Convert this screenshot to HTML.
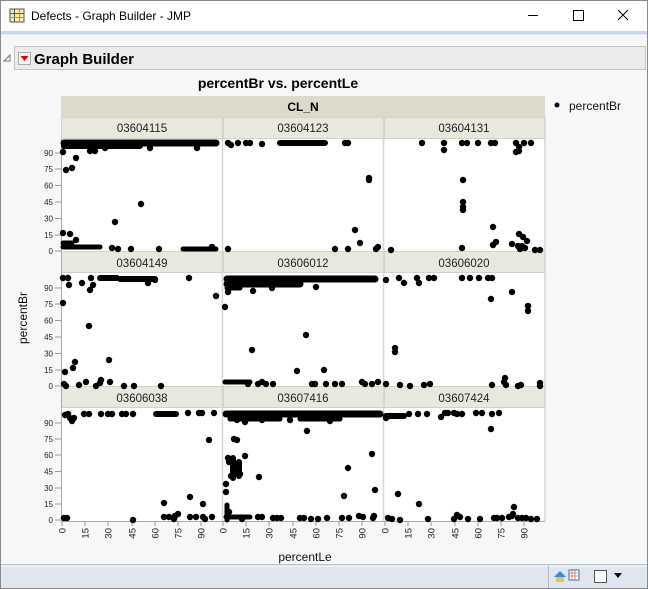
<!DOCTYPE html>
<html><head><meta charset="utf-8"><style>
html,body{margin:0;padding:0;width:648px;height:589px;overflow:hidden;background:#f7f7f7;font-family:"Liberation Sans",sans-serif}
svg{position:absolute;left:0;top:0}
</style></head><body>
<svg width="648" height="589" viewBox="0 0 648 589" xmlns="http://www.w3.org/2000/svg" font-family="Liberation Sans, sans-serif">
<!-- title bar -->
<rect x="0" y="0" width="648" height="31" fill="#fff"/>
<rect x="0" y="31" width="648" height="3" fill="#c9d7ea"/>
<rect x="0" y="34" width="648" height="1" fill="#e4ebf4"/>
<rect x="0.5" y="0.5" width="647" height="588" fill="none" stroke="#8a8a8a"/>
<g>
<rect x="10" y="9" width="14" height="13" fill="#f3f1a8" stroke="#555" stroke-width="1"/>
<line x1="10" y1="13.5" x2="24" y2="13.5" stroke="#555"/>
<line x1="14.5" y1="9" x2="14.5" y2="22" stroke="#555"/>
<line x1="19.5" y1="9" x2="19.5" y2="22" stroke="#6a8"/>
<line x1="10" y1="17.5" x2="24" y2="17.5" stroke="#6a8"/>
</g>
<text x="31" y="20" font-size="12" fill="#000">Defects - Graph Builder - JMP</text>
<line x1="528" y1="15.5" x2="538" y2="15.5" stroke="#000"/>
<rect x="573.5" y="10.5" width="10" height="10" fill="none" stroke="#000"/>
<path d="M618 10 L628 20 M628 10 L618 20" stroke="#000" stroke-width="1"/>

<!-- outline header -->
<path d="M4 61 L10 55 L10 61 Z" fill="none" stroke="#777"/>
<rect x="14.5" y="46.5" width="631" height="23" fill="#ebebeb" stroke="#c4c4c4"/>
<rect x="18.5" y="52.5" width="12" height="12" fill="#f4f4f4" stroke="#aaa"/>
<path d="M20.5 56 L28.5 56 L24.5 61 Z" fill="#d00"/>
<text x="34" y="64" font-size="15" font-weight="bold" fill="#000">Graph Builder</text>

<!-- chart title -->
<text x="278" y="88" font-size="14" font-weight="bold" text-anchor="middle" fill="#000">percentBr vs. percentLe</text>
<rect x="61" y="96" width="484" height="21" fill="#dcdacb"/>
<text x="303" y="111" font-size="12" font-weight="bold" text-anchor="middle">CL_N</text>

<!-- legend -->
<circle cx="557" cy="105" r="2.5" fill="#000"/>
<text x="569" y="110" font-size="12" fill="#111">percentBr</text>

<!-- strips -->
<g fill="#e8e8df" stroke="#d2d2c8">
<rect x="61.5" y="117.5" width="161" height="21"/><rect x="223.5" y="117.5" width="160" height="21"/><rect x="384.5" y="117.5" width="160" height="21"/>
<rect x="61.5" y="251.5" width="161" height="21"/><rect x="223.5" y="251.5" width="160" height="21"/><rect x="384.5" y="251.5" width="160" height="21"/>
<rect x="61.5" y="386.5" width="161" height="21"/><rect x="223.5" y="386.5" width="160" height="21"/><rect x="384.5" y="386.5" width="160" height="21"/>
</g>
<g font-size="11.5" text-anchor="middle" fill="#222">
<text x="142" y="132">03604115</text><text x="303" y="132">03604123</text><text x="464" y="132">03604131</text>
<text x="142" y="267">03604149</text><text x="303" y="267">03606012</text><text x="464" y="267">03606020</text>
<text x="142" y="402">03606038</text><text x="303" y="402">03607416</text><text x="464" y="402">03607424</text>
</g>
<!-- plot backgrounds -->
<g fill="#fff">
<rect x="61" y="139" width="484" height="112"/>
<rect x="61" y="273" width="484" height="113"/>
<rect x="61" y="408" width="484" height="113"/>
</g>
<g stroke="#d6d6d6" stroke-width="1.5">
<line x1="222.5" y1="117" x2="222.5" y2="521"/>
<line x1="383.5" y1="117" x2="383.5" y2="521"/>
<line x1="545" y1="117" x2="545" y2="521"/>
</g>
<line x1="61" y1="521.5" x2="545" y2="521.5" stroke="#aaa"/>
<line x1="61.5" y1="139" x2="61.5" y2="522" stroke="#aaa"/>

<!-- y axes -->
<g stroke="#999">
<path d="M55 251h6M55 235h6M55 218.5h6M55 202h6M55 185.5h6M55 169h6M55 153h6"/>
<path d="M55 386h6M55 370h6M55 353.5h6M55 337h6M55 320.5h6M55 304h6M55 288h6"/>
<path d="M55 520h6M55 504h6M55 488h6M55 471.5h6M55 455h6M55 439h6M55 423h6"/>
</g>
<g font-size="8" text-anchor="end" fill="#223">
<text x="53" y="254">0</text><text x="53" y="238">15</text><text x="53" y="221.5">30</text><text x="53" y="205">45</text><text x="53" y="188.5">60</text><text x="53" y="172">75</text><text x="53" y="156">90</text>
<text x="53" y="389">0</text><text x="53" y="373">15</text><text x="53" y="356.5">30</text><text x="53" y="340">45</text><text x="53" y="323.5">60</text><text x="53" y="307">75</text><text x="53" y="291">90</text>
<text x="53" y="523">0</text><text x="53" y="507">15</text><text x="53" y="491">30</text><text x="53" y="474.5">45</text><text x="53" y="458">60</text><text x="53" y="442">75</text><text x="53" y="426">90</text>
</g>
<!-- x axes -->
<g stroke="#999">
<path d="M62 521v5M85 521v5M108 521v5M132 521v5M155 521v5M178 521v5M201 521v5"/>
<path d="M223 521v5M246 521v5M269 521v5M293 521v5M316 521v5M339 521v5M362 521v5"/>
<path d="M385 521v5M408 521v5M431 521v5M455 521v5M478 521v5M501 521v5M524 521v5"/>
</g>
<g font-size="9.5" fill="#222" text-anchor="end">
<text transform="translate(65.5,528) rotate(-90)">0</text><text transform="translate(88.5,528) rotate(-90)">15</text><text transform="translate(111.5,528) rotate(-90)">30</text><text transform="translate(135.5,528) rotate(-90)">45</text><text transform="translate(158.5,528) rotate(-90)">60</text><text transform="translate(181.5,528) rotate(-90)">75</text><text transform="translate(204.5,528) rotate(-90)">90</text>
<text transform="translate(226.5,528) rotate(-90)">0</text><text transform="translate(249.5,528) rotate(-90)">15</text><text transform="translate(272.5,528) rotate(-90)">30</text><text transform="translate(296.5,528) rotate(-90)">45</text><text transform="translate(319.5,528) rotate(-90)">60</text><text transform="translate(342.5,528) rotate(-90)">75</text><text transform="translate(365.5,528) rotate(-90)">90</text>
<text transform="translate(388.5,528) rotate(-90)">0</text><text transform="translate(411.5,528) rotate(-90)">15</text><text transform="translate(434.5,528) rotate(-90)">30</text><text transform="translate(458.5,528) rotate(-90)">45</text><text transform="translate(481.5,528) rotate(-90)">60</text><text transform="translate(504.5,528) rotate(-90)">75</text><text transform="translate(527.5,528) rotate(-90)">90</text>
</g>
<text x="305" y="561" font-size="12" text-anchor="middle" fill="#111">percentLe</text>
<text transform="translate(27,318) rotate(-90)" font-size="12" text-anchor="middle" fill="#111">percentBr</text>

<!-- data bands -->
<g stroke="#000" stroke-linecap="round" fill="none">
<path d="M64 143H216" stroke-width="7"/>
<path d="M64 146H140" stroke-width="6"/>
<path d="M63 247H100" stroke-width="5"/><path d="M63 243H72" stroke-width="5"/><path d="M183 249H216" stroke-width="5"/>
<path d="M280 143H325" stroke-width="6"/>
<path d="M100 278H117M120 279H155" stroke-width="6"/>
<path d="M227 279H375" stroke-width="7"/><path d="M227 284H300" stroke-width="7"/><path d="M227 288H240" stroke-width="5"/>
<path d="M225 382H250" stroke-width="5"/>
<path d="M156 414H176" stroke-width="6"/>
<path d="M226 414H380" stroke-width="7"/><path d="M230 419H280M300 419H340" stroke-width="5"/>
<path d="M226 517H250" stroke-width="5"/><path d="M227 505V520" stroke-width="5"/>
<path d="M233 458V478" stroke-width="6"/><path d="M239 462V476" stroke-width="6"/>
<path d="M386 416H404" stroke-width="6"/>
</g>
<!-- dots -->
<g fill="#000">
<circle cx="63" cy="152" r="3.2"/><circle cx="66" cy="170" r="3.2"/><circle cx="72" cy="168" r="3.2"/><circle cx="76" cy="158" r="3.2"/><circle cx="90" cy="151" r="3.2"/><circle cx="95" cy="151" r="3.2"/><circle cx="105" cy="148" r="3.2"/><circle cx="150" cy="148" r="3.2"/><circle cx="197" cy="148" r="3.2"/>
<circle cx="63" cy="233" r="3.2"/><circle cx="70" cy="234" r="3.2"/><circle cx="76" cy="240" r="3.2"/><circle cx="115" cy="222" r="3.2"/><circle cx="141" cy="204" r="3.2"/><circle cx="112" cy="248" r="3.2"/><circle cx="118" cy="249" r="3.2"/><circle cx="131" cy="249" r="3.2"/><circle cx="159" cy="249" r="3.2"/><circle cx="212" cy="247" r="3.2"/>
<circle cx="228" cy="143" r="3.2"/><circle cx="231" cy="145" r="3.2"/><circle cx="238" cy="143" r="3.2"/><circle cx="246" cy="143" r="3.2"/><circle cx="250" cy="143" r="3.2"/><circle cx="262" cy="144" r="3.2"/><circle cx="345" cy="143" r="3.2"/><circle cx="348" cy="143" r="3.2"/>
<circle cx="369" cy="178" r="3.2"/><circle cx="369" cy="180" r="3.2"/><circle cx="355" cy="230" r="3.2"/><circle cx="360" cy="243" r="3.2"/><circle cx="335" cy="249" r="3.2"/><circle cx="348" cy="249" r="3.2"/><circle cx="376" cy="249" r="3.2"/><circle cx="378" cy="247" r="3.2"/><circle cx="228" cy="249" r="3.2"/>
<circle cx="422" cy="143" r="3.2"/><circle cx="444" cy="143" r="3.2"/><circle cx="444" cy="150" r="3.2"/><circle cx="462" cy="143" r="3.2"/><circle cx="467" cy="143" r="3.2"/><circle cx="478" cy="143" r="3.2"/><circle cx="491" cy="143" r="3.2"/><circle cx="495" cy="143" r="3.2"/><circle cx="516" cy="143" r="3.2"/><circle cx="519" cy="147" r="3.2"/><circle cx="519" cy="151" r="3.2"/><circle cx="524" cy="143" r="3.2"/><circle cx="531" cy="143" r="3.2"/><circle cx="516" cy="152" r="3.2"/>
<circle cx="463" cy="180" r="3.2"/><circle cx="463" cy="202" r="3.2"/><circle cx="463" cy="207" r="3.2"/><circle cx="463" cy="210" r="3.2"/><circle cx="462" cy="248" r="3.2"/><circle cx="493" cy="227" r="3.2"/><circle cx="493" cy="245" r="3.2"/><circle cx="496" cy="242" r="3.2"/><circle cx="512" cy="244" r="3.2"/><circle cx="519" cy="234" r="3.2"/><circle cx="520" cy="249" r="3.2"/><circle cx="523" cy="237" r="3.2"/><circle cx="525" cy="248" r="3.2"/><circle cx="535" cy="250" r="3.2"/><circle cx="540" cy="250" r="3.2"/><circle cx="391" cy="250" r="3.2"/><circle cx="518" cy="246" r="3.2"/><circle cx="527" cy="241" r="3.2"/><circle cx="522" cy="246" r="3.2"/>
<circle cx="63" cy="278" r="3.2"/><circle cx="68" cy="278" r="3.2"/><circle cx="82" cy="283" r="3.2"/><circle cx="91" cy="278" r="3.2"/><circle cx="93" cy="285" r="3.2"/><circle cx="69" cy="285" r="3.2"/><circle cx="63" cy="303" r="3.2"/><circle cx="90" cy="290" r="3.2"/><circle cx="89" cy="326" r="3.2"/><circle cx="109" cy="360" r="3.2"/><circle cx="65" cy="372" r="3.2"/><circle cx="73" cy="368" r="3.2"/><circle cx="75" cy="362" r="3.2"/><circle cx="189" cy="278" r="3.2"/><circle cx="216" cy="296" r="3.2"/><circle cx="155" cy="280" r="3.2"/><circle cx="148" cy="283" r="3.2"/>
<circle cx="64" cy="384" r="3.2"/><circle cx="66" cy="386" r="3.2"/><circle cx="79" cy="385" r="3.2"/><circle cx="86" cy="382" r="3.2"/><circle cx="96" cy="386" r="3.2"/><circle cx="100" cy="383" r="3.2"/><circle cx="101" cy="380" r="3.2"/><circle cx="110" cy="382" r="3.2"/><circle cx="124" cy="386" r="3.2"/><circle cx="134" cy="386" r="3.2"/><circle cx="161" cy="386" r="3.2"/>
<circle cx="225" cy="307" r="3.2"/><circle cx="253" cy="291" r="3.2"/><circle cx="272" cy="288" r="3.2"/><circle cx="316" cy="287" r="3.2"/><circle cx="252" cy="350" r="3.2"/><circle cx="306" cy="335" r="3.2"/><circle cx="297" cy="371" r="3.2"/><circle cx="324" cy="370" r="3.2"/><circle cx="228" cy="292" r="3.2"/>
<circle cx="248" cy="384" r="3.2"/><circle cx="258" cy="384" r="3.2"/><circle cx="262" cy="382" r="3.2"/><circle cx="266" cy="384" r="3.2"/><circle cx="273" cy="384" r="3.2"/><circle cx="312" cy="384" r="3.2"/><circle cx="315" cy="384" r="3.2"/><circle cx="326" cy="384" r="3.2"/><circle cx="335" cy="384" r="3.2"/><circle cx="342" cy="384" r="3.2"/><circle cx="362" cy="382" r="3.2"/><circle cx="365" cy="384" r="3.2"/><circle cx="372" cy="384" r="3.2"/><circle cx="378" cy="382" r="3.2"/>
<circle cx="386" cy="280" r="3.2"/><circle cx="399" cy="278" r="3.2"/><circle cx="404" cy="283" r="3.2"/><circle cx="417" cy="278" r="3.2"/><circle cx="419" cy="283" r="3.2"/><circle cx="429" cy="278" r="3.2"/><circle cx="434" cy="278" r="3.2"/><circle cx="462" cy="278" r="3.2"/><circle cx="470" cy="278" r="3.2"/><circle cx="479" cy="278" r="3.2"/><circle cx="488" cy="278" r="3.2"/><circle cx="492" cy="278" r="3.2"/><circle cx="491" cy="299" r="3.2"/><circle cx="512" cy="292" r="3.2"/><circle cx="528" cy="306" r="3.2"/><circle cx="528" cy="311" r="3.2"/><circle cx="395" cy="348" r="3.2"/><circle cx="395" cy="352" r="3.2"/>
<circle cx="386" cy="384" r="3.2"/><circle cx="400" cy="385" r="3.2"/><circle cx="410" cy="386" r="3.2"/><circle cx="424" cy="385" r="3.2"/><circle cx="430" cy="384" r="3.2"/><circle cx="492" cy="385" r="3.2"/><circle cx="504" cy="382" r="3.2"/><circle cx="506" cy="385" r="3.2"/><circle cx="505" cy="378" r="3.2"/><circle cx="518" cy="386" r="3.2"/><circle cx="521" cy="385" r="3.2"/><circle cx="540" cy="383" r="3.2"/><circle cx="540" cy="386" r="3.2"/>
<circle cx="68" cy="414" r="3.2"/><circle cx="70" cy="418" r="3.2"/><circle cx="72" cy="421" r="3.2"/><circle cx="74" cy="418" r="3.2"/><circle cx="65" cy="415" r="3.2"/><circle cx="84" cy="414" r="3.2"/><circle cx="89" cy="414" r="3.2"/><circle cx="101" cy="414" r="3.2"/><circle cx="108" cy="414" r="3.2"/><circle cx="112" cy="414" r="3.2"/><circle cx="122" cy="414" r="3.2"/><circle cx="126" cy="414" r="3.2"/><circle cx="133" cy="414" r="3.2"/><circle cx="188" cy="413" r="3.2"/><circle cx="199" cy="413" r="3.2"/><circle cx="202" cy="413" r="3.2"/><circle cx="214" cy="413" r="3.2"/><circle cx="209" cy="440" r="3.2"/>
<circle cx="164" cy="503" r="3.2"/><circle cx="190" cy="497" r="3.2"/><circle cx="203" cy="504" r="3.2"/><circle cx="64" cy="518" r="3.2"/><circle cx="67" cy="518" r="3.2"/><circle cx="133" cy="520" r="3.2"/><circle cx="164" cy="517" r="3.2"/><circle cx="169" cy="517" r="3.2"/><circle cx="175" cy="516" r="3.2"/><circle cx="178" cy="514" r="3.2"/><circle cx="190" cy="517" r="3.2"/><circle cx="196" cy="517" r="3.2"/><circle cx="203" cy="517" r="3.2"/><circle cx="212" cy="517" r="3.2"/><circle cx="174" cy="519" r="3.2"/><circle cx="205" cy="519" r="3.2"/>
<circle cx="307" cy="431" r="3.2"/><circle cx="234" cy="439" r="3.2"/><circle cx="237" cy="440" r="3.2"/><circle cx="228" cy="458" r="3.2"/><circle cx="229" cy="462" r="3.2"/><circle cx="236" cy="465" r="3.2"/><circle cx="231" cy="476" r="3.2"/><circle cx="240" cy="474" r="3.2"/><circle cx="259" cy="477" r="3.2"/><circle cx="245" cy="456" r="3.2"/><circle cx="226" cy="484" r="3.2"/><circle cx="226" cy="492" r="3.2"/><circle cx="229" cy="512" r="3.2"/><circle cx="237" cy="420" r="3.2"/><circle cx="245" cy="422" r="3.2"/><circle cx="262" cy="420" r="3.2"/><circle cx="290" cy="420" r="3.2"/><circle cx="330" cy="421" r="3.2"/>
<circle cx="242" cy="519" r="3.2"/><circle cx="258" cy="517" r="3.2"/><circle cx="262" cy="517" r="3.2"/><circle cx="273" cy="518" r="3.2"/><circle cx="277" cy="518" r="3.2"/><circle cx="281" cy="518" r="3.2"/><circle cx="300" cy="518" r="3.2"/><circle cx="304" cy="518" r="3.2"/><circle cx="311" cy="519" r="3.2"/><circle cx="318" cy="519" r="3.2"/><circle cx="327" cy="518" r="3.2"/><circle cx="342" cy="518" r="3.2"/><circle cx="349" cy="518" r="3.2"/><circle cx="359" cy="516" r="3.2"/><circle cx="363" cy="517" r="3.2"/><circle cx="373" cy="518" r="3.2"/><circle cx="374" cy="516" r="3.2"/>
<circle cx="344" cy="496" r="3.2"/><circle cx="348" cy="468" r="3.2"/><circle cx="372" cy="454" r="3.2"/><circle cx="375" cy="490" r="3.2"/>
<circle cx="386" cy="418" r="3.2"/><circle cx="390" cy="416" r="3.2"/><circle cx="409" cy="414" r="3.2"/><circle cx="418" cy="414" r="3.2"/><circle cx="427" cy="414" r="3.2"/><circle cx="441" cy="417" r="3.2"/><circle cx="445" cy="413" r="3.2"/><circle cx="448" cy="413" r="3.2"/><circle cx="454" cy="413" r="3.2"/><circle cx="457" cy="414" r="3.2"/><circle cx="462" cy="414" r="3.2"/><circle cx="476" cy="413" r="3.2"/><circle cx="482" cy="413" r="3.2"/><circle cx="492" cy="414" r="3.2"/><circle cx="491" cy="429" r="3.2"/><circle cx="499" cy="413" r="3.2"/>
<circle cx="398" cy="494" r="3.2"/><circle cx="419" cy="504" r="3.2"/><circle cx="388" cy="518" r="3.2"/><circle cx="392" cy="519" r="3.2"/><circle cx="400" cy="520" r="3.2"/><circle cx="428" cy="519" r="3.2"/><circle cx="454" cy="519" r="3.2"/><circle cx="457" cy="515" r="3.2"/><circle cx="460" cy="517" r="3.2"/><circle cx="468" cy="519" r="3.2"/><circle cx="480" cy="519" r="3.2"/><circle cx="494" cy="518" r="3.2"/><circle cx="497" cy="518" r="3.2"/><circle cx="502" cy="518" r="3.2"/><circle cx="509" cy="517" r="3.2"/><circle cx="512" cy="516" r="3.2"/><circle cx="513" cy="514" r="3.2"/><circle cx="514" cy="507" r="3.2"/><circle cx="518" cy="518" r="3.2"/><circle cx="522" cy="518" r="3.2"/><circle cx="526" cy="518" r="3.2"/><circle cx="531" cy="519" r="3.2"/><circle cx="537" cy="519" r="3.2"/>
</g>

<!-- status bar -->
<rect x="1" y="565" width="646" height="23" fill="#dfe6f0"/>
<line x1="1" y1="564.5" x2="647" y2="564.5" stroke="#b9c4d2"/>
<line x1="1" y1="566.5" x2="647" y2="566.5" stroke="#f4f7fb"/>
<line x1="548.5" y1="566" x2="548.5" y2="588" stroke="#b0b8c4"/>
<path d="M554 577 L560 571 L566 577 Z" fill="#3a8ad8"/>
<rect x="556" y="577" width="8" height="5" fill="#e8c060"/>
<rect x="569" y="570" width="10" height="10" fill="#fff" stroke="#4070b0"/>
<path d="M569 573h10M569 576h10M572 570v10M575 570v10" stroke="#c04040" stroke-width="0.6"/>
<rect x="594.5" y="570.5" width="12" height="12" fill="#fff" stroke="#555"/>
<path d="M614 573 L622 573 L618 578 Z" fill="#000"/>
</svg>
</body></html>
